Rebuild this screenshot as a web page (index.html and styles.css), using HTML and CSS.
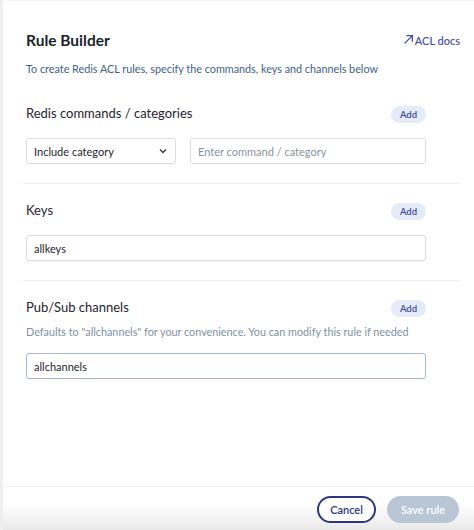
FILE: index.html
```html
<!DOCTYPE html>
<html lang="en">
<head>
<meta charset="utf-8">
<title>Rule Builder</title>
<link rel="stylesheet" href="styles.css">
</head>
<body>
<div class="panel">
  <div class="main">
    <div class="header">
      <h1 class="title">Rule Builder</h1>
      <a class="docs" href="#">
        <svg class="docs-icon" width="11" height="11" viewBox="0 0 10 10"><path d="M1.5 8.5 L8.5 1.5 M3 1.5 H8.5 V7" fill="none" stroke="currentColor" stroke-width="1.2"/></svg>ACL docs</a>
    </div>
    <p class="intro">To create Redis ACL rules, specify the commands, keys and channels below</p>

    <section class="section">
      <div class="label-row">
        <span class="label">Redis commands / categories</span>
        <button class="add">Add</button>
      </div>
      <div class="field-row">
        <div class="select">
          <span>Include category</span>
          <svg width="8" height="6" viewBox="0 0 8 6"><path d="M1 1.5 L4 4.5 L7 1.5" fill="none" stroke="#333" stroke-width="1.3"/></svg>
        </div>
        <div class="input placeholder grow">Enter command / category</div>
      </div>
    </section>

    <hr class="divider">

    <section class="section">
      <div class="label-row">
        <span class="label">Keys</span>
        <button class="add">Add</button>
      </div>
      <div class="field-row">
        <div class="input grow">allkeys</div>
      </div>
    </section>

    <hr class="divider">

    <section class="section">
      <div class="label-row">
        <span class="label">Pub/Sub channels</span>
        <button class="add">Add</button>
      </div>
      <p class="hint">Defaults to "allchannels" for your convenience. You can modify this rule if needed</p>
      <div class="field-row">
        <div class="input grow focused">allchannels</div>
      </div>
    </section>
  </div>

  <div class="footer">
    <button class="btn cancel">Cancel</button>
    <button class="btn save">Save rule</button>
  </div>
</div>
</body>
</html>
```

FILE: styles.css
```css
* { box-sizing: border-box; }
html, body { margin: 0; padding: 0; background: #fff; }
body {
  font-family: "Lato", "Noto Sans", sans-serif;
  color: #1f2430;
}
.panel {
  height: 530px;
  display: flex;
  flex-direction: column;
  border-left: 3px solid #efefef;
  border-top: 1px solid #f6f6f6;
}
.main {
  flex: 1;
  padding: 29px 14px 0 23px;
}
.header {
  display: flex;
  justify-content: space-between;
  align-items: center;
  height: 20px;
}
.title {
  margin: 0;
  font-size: 15.5px;
  font-weight: 700;
  color: #1a1f2c;
  line-height: 20px;
}
.docs {
  display: flex;
  align-items: center;
  gap: 1px;
  font-size: 11px;
  color: #3c4ba6;
  text-decoration: none;
  font-weight: 500;
}
.docs-icon { margin-top: -1px; }
.intro {
  margin: 11px 0 0;
  font-size: 10.8px;
  line-height: 16px;
  color: #3e6189;
}
.section {
  padding-right: 34px;
}
.section:first-of-type { margin-top: 27px; }
.label-row {
  display: flex;
  justify-content: space-between;
  align-items: center;
  height: 18px;
}
.label {
  font-size: 13px;
  color: #1f2430;
}
.add {
  font-family: inherit;
  border: none;
  background: #e5ebf8;
  color: #3c4ba6;
  font-size: 9.5px;
  font-weight: 600;
  border-radius: 9px;
  width: 35px;
  height: 17px;
  padding: 0;
  margin-top: 3px;
}
.field-row {
  display: flex;
  gap: 14px;
  margin-top: 16px;
}
.select, .input {
  height: 26px;
  border: 1px solid #dadde2;
  border-radius: 3px;
  font-size: 11px;
  display: flex;
  align-items: center;
  padding: 0 7px;
  color: #1f2430;
  box-shadow: 0 1px 1px rgba(0,0,0,0.03);
}
.select {
  width: 150px;
  justify-content: space-between;
  padding-right: 8px;
}
.grow { flex: 1; }
.placeholder { color: #8593a5; }
.focused { border-color: #a9b3df; }
.divider {
  border: none;
  border-top: 1px solid #eeeeee;
  margin: 19px 0 17px -3px;
}
.hint {
  margin: 8px 0 0;
  font-size: 10.8px;
  line-height: 16px;
  color: #7d90a6;
}
.hint + .field-row { margin-top: 13px; }
.footer {
  height: 44px;
  border-top: 1px solid #f0f0f0;
  display: flex;
  justify-content: flex-end;
  align-items: flex-start;
  gap: 11px;
  padding: 9px 15px 0 0;
  background: linear-gradient(to bottom, #ffffff 0%, #ffffff 40%, #e9e9e9 100%);
}
.btn {
  font-family: inherit;
  height: 27px;
  border-radius: 14px;
  font-size: 11px;
  font-weight: 600;
  padding: 0;
}
.cancel {
  width: 59px;
  background: #fff;
  border: 2px solid #2b3785;
  color: #2b3785;
}
.save {
  width: 72px;
  background: #b9c6d6;
  border: none;
  color: #fff;
}
```
